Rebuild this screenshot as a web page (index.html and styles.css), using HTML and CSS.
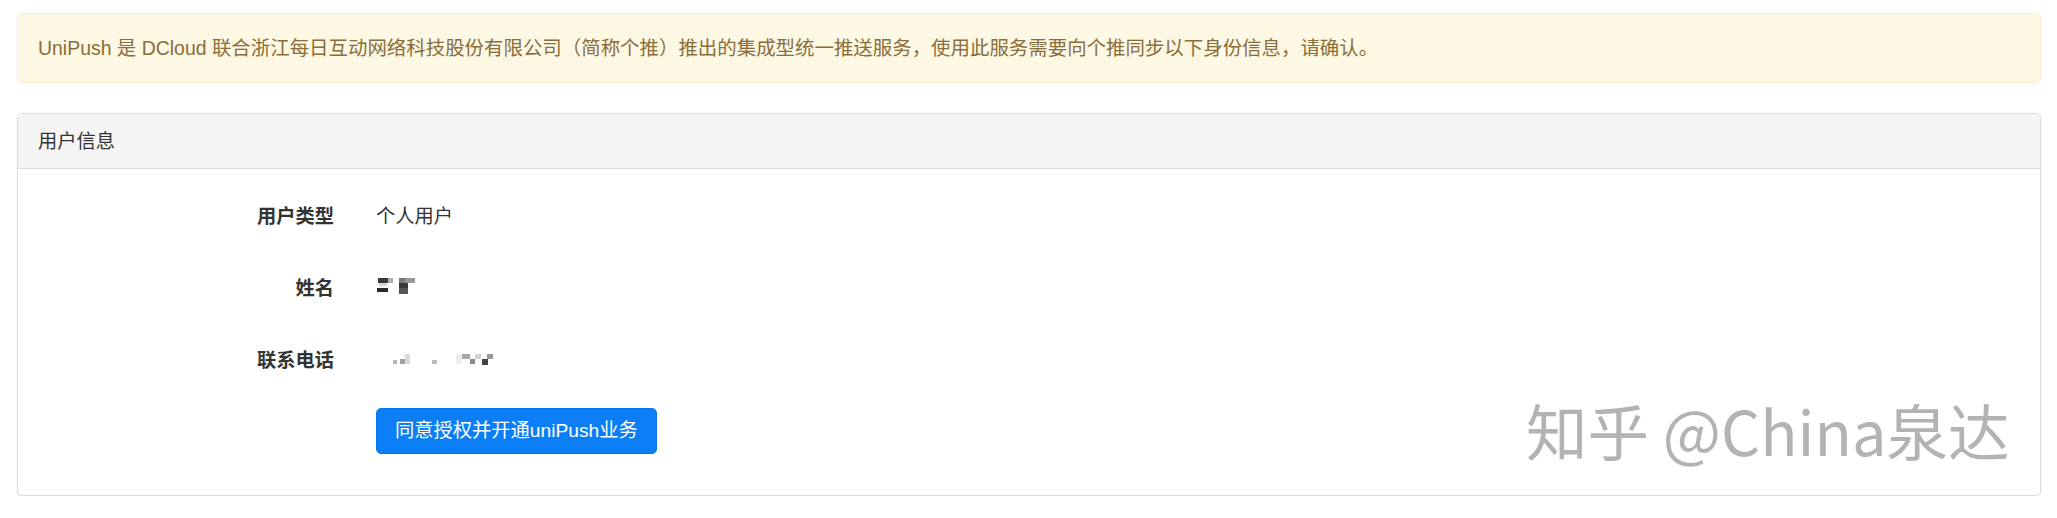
FILE: index.html
```html
<!DOCTYPE html>
<html lang="zh-CN">
<head>
<meta charset="utf-8">
<title>UniPush</title>
<link rel="stylesheet" href="styles.css">
</head>
<body>
<div class="page">
  <div class="alert">UniPush 是 DCloud 联合浙江每日互动网络科技股份有限公司（简称个推）推出的集成型统一推送服务，使用此服务需要向个推同步以下身份信息，请确认。</div>
  <div class="panel">
    <div class="panel-heading">用户信息</div>
    <div class="panel-body">
      <div class="form-row">
        <div class="form-label">用户类型</div>
        <div class="form-value">个人用户</div>
      </div>
      <div class="form-row">
        <div class="form-label">姓名</div>
        <div class="form-value">
          <svg class="mosaic-name" width="42" height="20" viewBox="0 0 42 20">
            <rect x="2" y="1" width="10" height="5" fill="#3a3a3a"/>
            <rect x="12" y="1" width="5" height="5" fill="#b0b0b0"/>
            <rect x="23" y="1" width="6" height="5" fill="#777"/>
            <rect x="29" y="1" width="10" height="5" fill="#999"/>
            <rect x="3" y="6" width="8" height="3" fill="#d6d6d6"/>
            <rect x="1" y="11" width="11" height="4" fill="#2a2a2a"/>
            <rect x="23" y="6" width="9" height="5" fill="#3a3a3a"/>
            <rect x="23" y="11" width="9" height="6" fill="#555"/>
          </svg>
        </div>
      </div>
      <div class="form-row">
        <div class="form-label">联系电话</div>
        <div class="form-value">
          <svg class="mosaic-phone" width="120" height="18" viewBox="0 0 120 18">
            <rect x="17" y="10" width="4" height="4" fill="#b5b5b5"/>
            <rect x="24" y="9" width="5" height="5" fill="#a0a0a0"/>
            <rect x="29" y="4" width="5" height="10" fill="#dadada"/>
            <rect x="56" y="10" width="5" height="4" fill="#bcbcbc"/>
            <rect x="80" y="4" width="6" height="10" fill="#ececec"/>
            <rect x="86" y="4" width="8" height="5" fill="#a8a8a8"/>
            <rect x="94" y="9" width="5" height="5" fill="#8a8a8a"/>
            <rect x="99" y="4" width="6" height="5" fill="#d0d0d0"/>
            <rect x="106" y="9" width="6" height="6" fill="#444"/>
            <rect x="111" y="4" width="6" height="5" fill="#999"/>
          </svg>
        </div>
      </div>
      <div class="form-row form-row-last">
        <div class="form-label"></div>
        <div class="form-value">
          <button class="btn-primary" type="button">同意授权并开通uniPush业务</button>
        </div>
      </div>
    </div>
    <div class="watermark">知乎 @China泉达</div>
  </div>
</div>
</body>
</html>
```

FILE: styles.css
```css
html, body {
  margin: 0;
  padding: 0;
  background: #ffffff;
}

body {
  font-family: "Liberation Sans", "Noto Sans CJK SC", sans-serif;
  font-size: 19.25px;
  color: #333333;
}

.page {
  padding: 13px 16px 0 17px;
}

.alert {
  background: #fcf8e3;
  border: 1px solid #faebcc;
  border-radius: 5px;
  color: #8a6d3b;
  padding: 20px 20px;
  font-size: 19.45px;
  line-height: 28px;
  margin-bottom: 30px;
}

.panel {
  position: relative;
  border: 1px solid #dddddd;
  border-radius: 5px;
  background: #ffffff;
  box-shadow: 0 1px 2px rgba(0, 0, 0, 0.08);
}

.panel-heading {
  background: #f5f5f5;
  border-bottom: 1px solid #dddddd;
  border-radius: 4px 4px 0 0;
  padding: 13.5px 20px;
  line-height: 27px;
  color: #333333;
}

.panel-body {
  padding: 23px 0 21px;
}

.form-row {
  display: flex;
  align-items: center;
  height: 46px;
  margin-bottom: 26px;
}

.form-row-last {
  margin-bottom: 20px;
}

.form-label {
  width: 16.6667%;
  box-sizing: border-box;
  padding-right: 21px;
  text-align: right;
  font-weight: bold;
  color: #333333;
}

.form-value {
  flex: 1;
  padding-left: 21px;
  display: flex;
  align-items: center;
  color: #333333;
}

.mosaic-name,
.mosaic-phone {
  display: block;
}

.btn-primary {
  font-family: "Liberation Sans", "Noto Sans CJK SC", sans-serif;
  font-size: 19.25px;
  line-height: 26px;
  padding: 9px 18px;
  color: #ffffff;
  background: #0c7ef5;
  border: 1px solid #0a78ec;
  border-radius: 5px;
  cursor: pointer;
}

.watermark {
  position: absolute;
  left: 1508px;
  top: 285px;
  font-family: "Noto Sans CJK SC", sans-serif;
  font-size: 61.5px;
  font-weight: 400;
  line-height: 61.5px;
  color: #b3b3b3;
  text-shadow: 1px 1px 0 rgba(255, 255, 255, 0.6);
  white-space: nowrap;
  pointer-events: none;
}
```
